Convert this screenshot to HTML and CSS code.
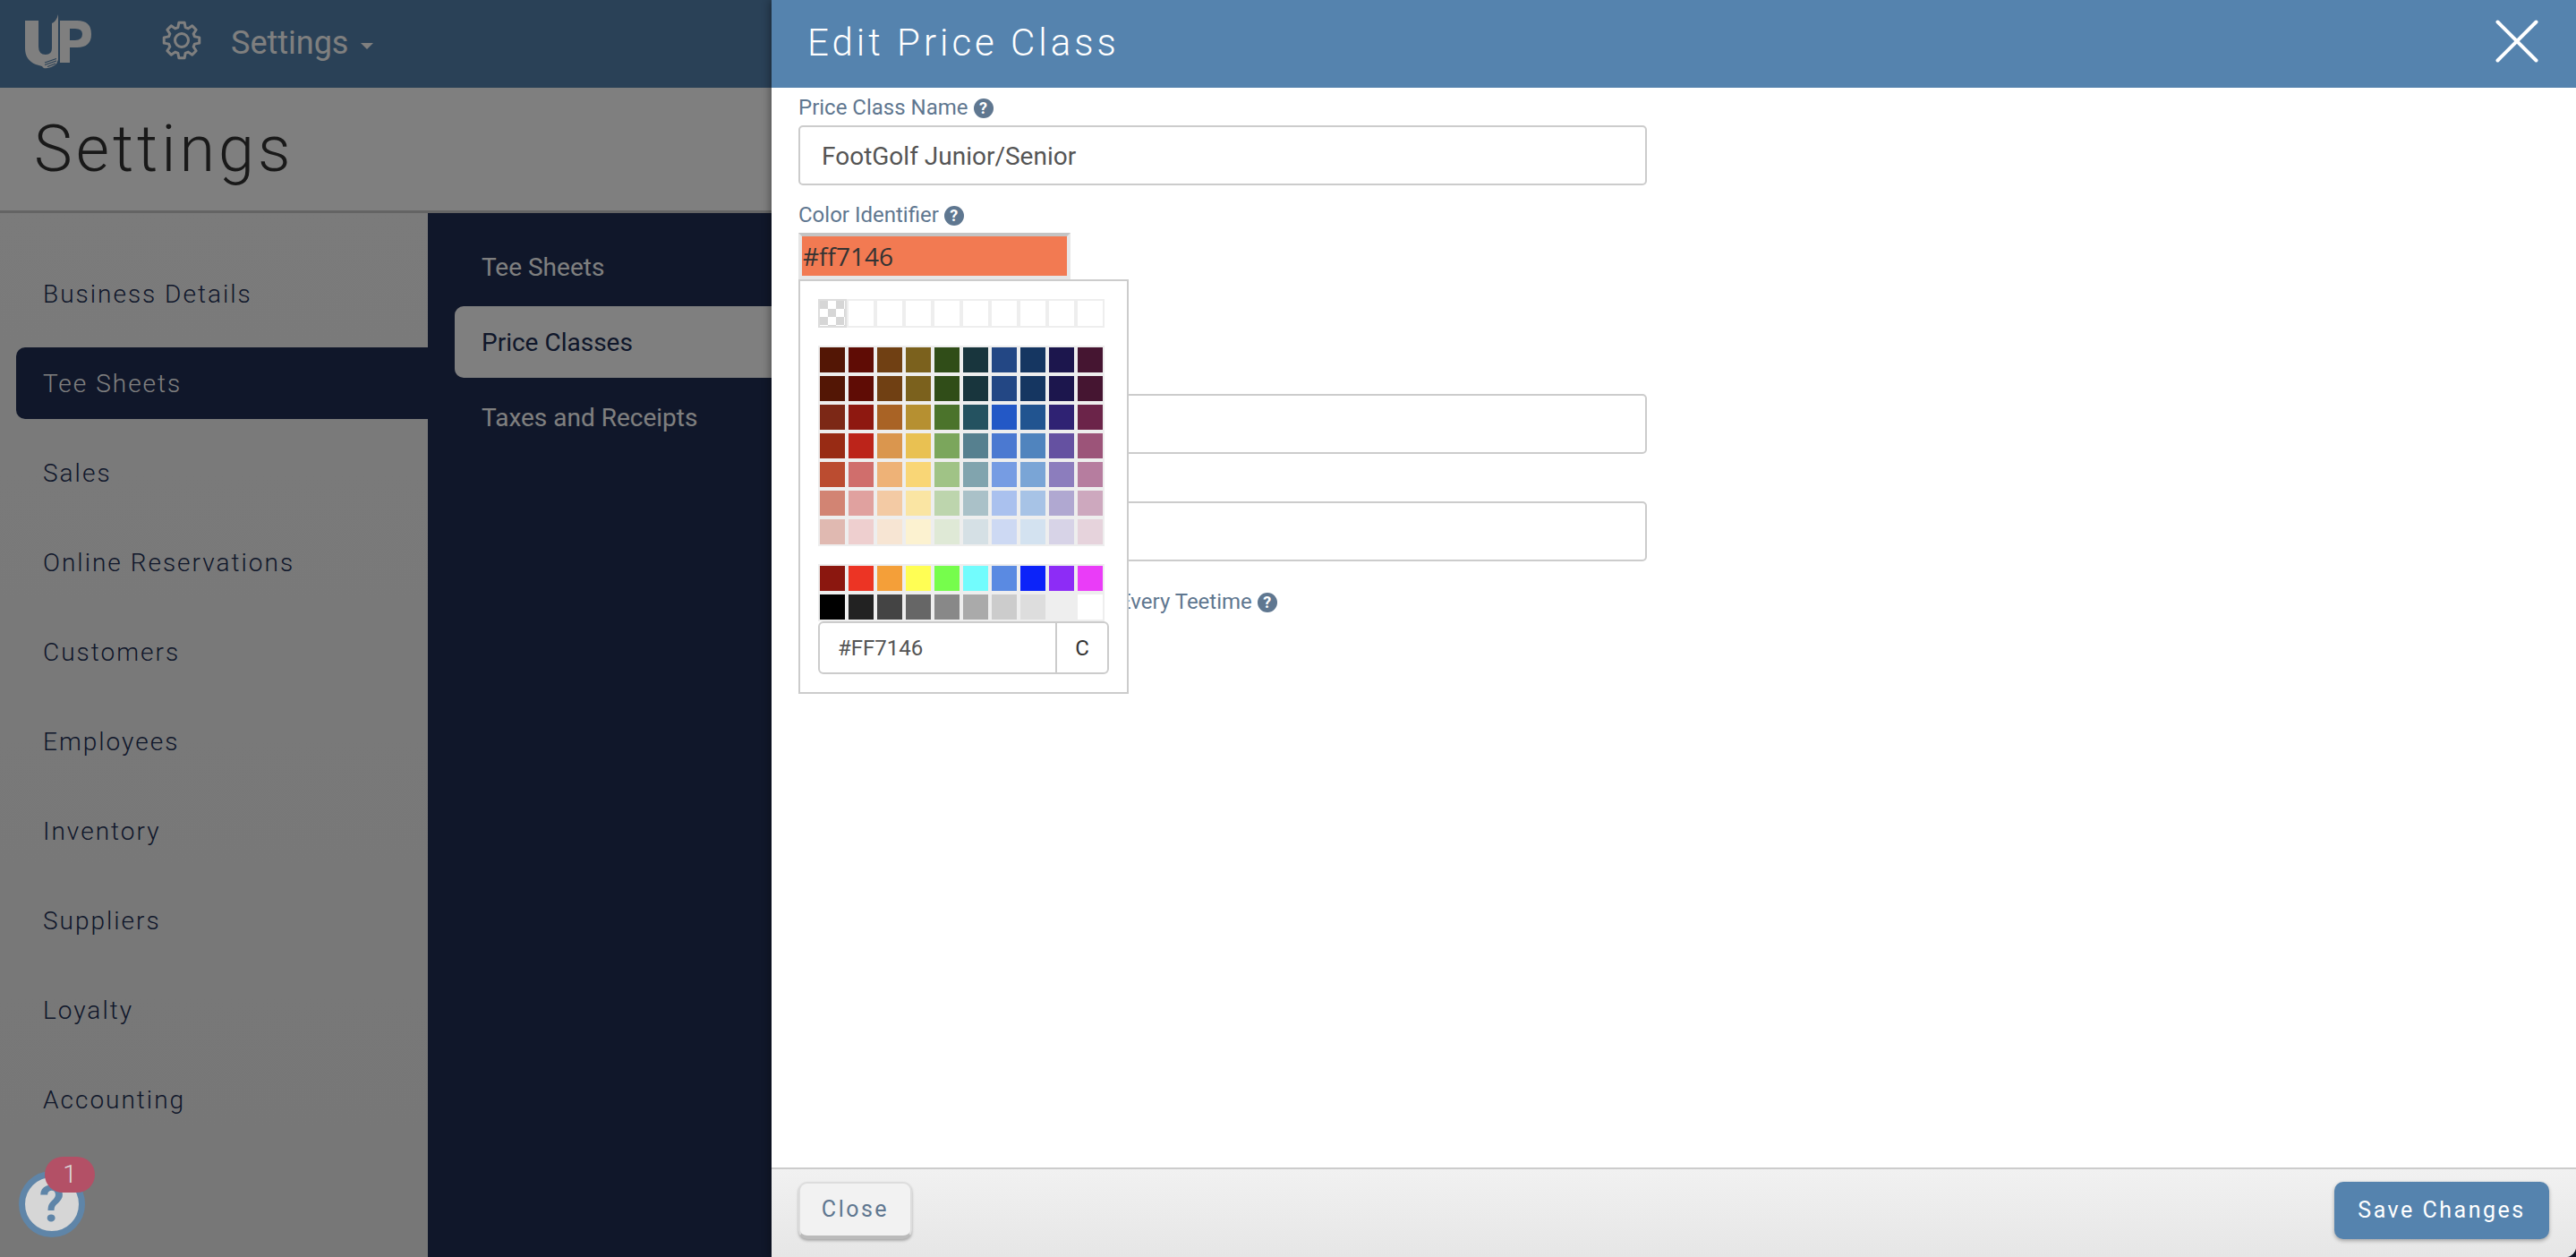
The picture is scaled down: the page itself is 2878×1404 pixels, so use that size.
FILE: index.html
```html
<!DOCTYPE html>
<html lang="en">
<head>
<meta charset="utf-8">
<title>Edit Price Class</title>
<link rel="stylesheet" href="styles.css">
</head>
<body>
<div class="app">
  <header class="topbar">
    <svg class="logo" viewBox="0 0 90 75" aria-hidden="true">
      <path class="logo-fill" d="M8 13H23V42Q23 51 31 51Q38 51 38 44V16Q43 14 45 6V56L38 60L27 64L20 62Q8 57 8 44Z"/>
      <path class="logo-fill" fill-rule="evenodd" d="M47 13H66Q82 13 82 28Q82 43 66 43H58V60H47ZM58 22V35H64Q72 35 72 28Q72 22 64 22Z"/>
      <path class="logo-fill" d="M26 60Q34 52 45 53Q46 62 37 65Q31 67 29 66Q26 64 26 60Z"/>
      <path class="logo-lines" d="M30 60L43 55.5M30 62.5L43 58M33 64.5L42 61"/>
    </svg>
    <svg class="gear" viewBox="0 0 48 48" aria-hidden="true">
      <polygon transform="translate(24 24)" points="14.42,-4.13 19.75,-3.13 19.75,3.13 14.42,4.13 13.12,7.27 16.18,11.76 11.76,16.18 7.27,13.12 4.13,14.42 3.13,19.75 -3.13,19.75 -4.13,14.42 -7.27,13.12 -11.76,16.18 -16.18,11.76 -13.12,7.27 -14.42,4.13 -19.75,3.13 -19.75,-3.13 -14.42,-4.13 -13.12,-7.27 -16.18,-11.76 -11.76,-16.18 -7.27,-13.12 -4.13,-14.42 -3.13,-19.75 3.13,-19.75 4.13,-14.42 7.27,-13.12 11.76,-16.18 16.18,-11.76 13.12,-7.27"/>
      <circle cx="24" cy="24" r="7.5"/>
    </svg>
    <span class="top-title">Settings</span>
    <span class="caret"></span>
  </header>
  <div class="page-head"><h1>Settings</h1></div>
  <div class="columns">
    <nav class="side">
      <a>Business Details</a>
      <a class="on">Tee Sheets</a>
      <a>Sales</a>
      <a>Online Reservations</a>
      <a>Customers</a>
      <a>Employees</a>
      <a>Inventory</a>
      <a>Suppliers</a>
      <a>Loyalty</a>
      <a>Accounting</a>
    </nav>
    <nav class="sub">
      <a>Tee Sheets</a>
      <a class="on">Price Classes</a>
      <a>Taxes and Receipts</a>
    </nav>
  </div>
</div>
<div class="backdrop"></div>
<div class="fab">
  <span class="fab-mark">?</span>
  <span class="fab-badge">1</span>
</div>
<section class="modal">
  <div class="modal-head">
    <h2>Edit Price Class</h2>
    <svg class="x" viewBox="0 0 48 48" aria-hidden="true"><path d="M2.5 2.5l43 43M45.5 2.5l-43 43"/></svg>
  </div>
  <div class="modal-body">
    <div class="field">
      <label>Price Class Name <span class="help">?</span></label>
      <div class="input">FootGolf Junior/Senior</div>
    </div>
    <div class="field color-field">
      <label>Color Identifier <span class="help">?</span></label>
      <div class="color-input"><span class="color-value">#ff7146</span></div>
      <div class="picker">
        <div class="swatches blank">
          <i class="none"></i><i></i><i></i><i></i><i></i><i></i><i></i><i></i><i></i><i></i>
        </div>
        <div class="swatches">
          <i class="c1"></i><i class="c2"></i><i class="c3"></i><i class="c4"></i><i class="c5"></i><i class="c6"></i><i class="c7"></i><i class="c8"></i><i class="c9"></i><i class="c10"></i>
          <i class="c1"></i><i class="c2"></i><i class="c3"></i><i class="c4"></i><i class="c5"></i><i class="c6"></i><i class="c7"></i><i class="c8"></i><i class="c9"></i><i class="c10"></i>
          <i class="c11"></i><i class="c12"></i><i class="c13"></i><i class="c14"></i><i class="c15"></i><i class="c16"></i><i class="c17"></i><i class="c18"></i><i class="c19"></i><i class="c20"></i>
          <i class="c21"></i><i class="c22"></i><i class="c23"></i><i class="c24"></i><i class="c25"></i><i class="c26"></i><i class="c27"></i><i class="c28"></i><i class="c29"></i><i class="c30"></i>
          <i class="c31"></i><i class="c32"></i><i class="c33"></i><i class="c34"></i><i class="c35"></i><i class="c36"></i><i class="c37"></i><i class="c38"></i><i class="c39"></i><i class="c40"></i>
          <i class="c41"></i><i class="c42"></i><i class="c43"></i><i class="c44"></i><i class="c45"></i><i class="c46"></i><i class="c47"></i><i class="c48"></i><i class="c49"></i><i class="c50"></i>
          <i class="c51"></i><i class="c52"></i><i class="c53"></i><i class="c54"></i><i class="c55"></i><i class="c56"></i><i class="c57"></i><i class="c58"></i><i class="c59"></i><i class="c60"></i>
        </div>
        <div class="swatches base">
          <i class="b1"></i><i class="b2"></i><i class="b3"></i><i class="b4"></i><i class="b5"></i><i class="b6"></i><i class="b7"></i><i class="b8"></i><i class="b9"></i><i class="b10"></i>
          <i class="g1"></i><i class="g2"></i><i class="g3"></i><i class="g4"></i><i class="g5"></i><i class="g6"></i><i class="g7"></i><i class="g8"></i><i class="g9"></i><i class="g10"></i>
        </div>
        <div class="hex-group">
          <span class="hex">#FF7146</span>
          <span class="hex-btn">C</span>
        </div>
      </div>
    </div>
    <div class="field spacer-field"><div class="input"></div></div>
    <div class="field spacer-field"><div class="input"></div></div>
    <div class="check-row">Every Teetime <span class="help">?</span></div>
  </div>
  <div class="modal-foot">
    <button class="btn btn-close">Close</button>
    <button class="btn btn-save">Save Changes</button>
  </div>
</section>
</body>
</html>
```
FILE: styles.css
```css
* { box-sizing: border-box; }
html, body { margin: 0; height: 100%; overflow: hidden; }
body { font-family: Roboto, sans-serif; background: #fff; }
.app { width: 2878px; height: 1404px; display: flex; flex-direction: column; }

.topbar { height: 98px; background: #5583ae; display: flex; align-items: center; color: #fff; flex: none; }
.logo { width: 90px; height: 75px; margin: -3px 0 0 20px; flex: none; }
.logo-fill { fill: #fff; }
.logo-lines { stroke: #5583ae; stroke-width: 1.2; fill: none; }
.gear { width: 48px; height: 48px; margin: -8px 0 0 69px; fill: none; stroke: #fff; stroke-width: 3; stroke-linejoin: round; flex: none; }
.top-title { font-size: 36px; margin-left: 31px; margin-top: -2px; }
.caret { width: 0; height: 0; border: 7.5px solid transparent; border-top-color: #fff; border-bottom: 0; margin: 4px 0 0 14px; }

.page-head { height: 140px; flex: none; background: #fff; border-bottom: 3px solid #c8c8c8; padding-left: 38px; display: flex; align-items: center; }
.page-head h1 { margin: 0; font-size: 72px; font-weight: 300; letter-spacing: 4px; color: #333; }

.columns { flex: 1; display: flex; min-height: 0; }
.side { width: 478px; background: linear-gradient(#f6f6f6, #eee); padding: 50px 0 0 18px; display: flex; flex-direction: column; gap: 20px; }
.side a { height: 80px; display: flex; align-items: center; padding-left: 30px; font-size: 28px; font-weight: 300; letter-spacing: 2px; color: #202e54; border-radius: 10px 0 0 10px; flex: none; }
.side a.on { background: #202e54; color: #fff; }
.sub { flex: 1; background: #202e54; padding: 20px 0 0 30px; display: flex; flex-direction: column; gap: 4px; }
.sub a { height: 80px; display: flex; align-items: center; padding-left: 30px; font-size: 28px; color: #fff; border-radius: 10px 0 0 10px; }
.sub a.on { background: #fff; color: #202e54; }

.backdrop { position: absolute; inset: 0; background: rgba(0,0,0,.5); }

.fab { position: absolute; left: 21px; top: 1308px; width: 74px; height: 74px; border-radius: 50%; background: #d6d6d6; border: 7px solid #5f85a8; display: flex; align-items: center; justify-content: center; }
.fab-mark { font-size: 56px; font-weight: 700; color: #5f85a8; line-height: 1; filter: blur(.6px); }
.fab-badge { position: absolute; left: 22px; top: -23px; width: 56px; height: 40px; border-radius: 20px; background: #b35066; color: #ddd; font-size: 28px; font-weight: 300; text-align: center; line-height: 40px; }

.modal { position: absolute; left: 862px; top: 0; width: 2016px; height: 1404px; background: #fff; display: flex; flex-direction: column; border-bottom-right-radius: 12px; box-shadow: -2px 0 8px rgba(0,0,0,.35); }
.modal-head { height: 98px; flex: none; background: #5583ae; display: flex; align-items: center; justify-content: space-between; padding: 0 42px 3px 40px; }
.modal-head h2 { margin: 0; font-size: 42px; font-weight: 300; letter-spacing: 4px; color: #fff; }
.x { width: 48px; height: 48px; margin-top: -3px; fill: none; stroke: #fff; stroke-width: 4; stroke-linecap: round; }

.modal-body { flex: 1; padding: 6px 30px 0; min-height: 0; }
.field { position: relative; width: 948px; }
.field label { display: block; height: 36px; font-size: 24px; line-height: 32px; color: #5f7790; }
.input { height: 67px; border: 2px solid #ccc; border-radius: 5px; padding: 2px 0 0 24px; display: flex; align-items: center; font-size: 28px; color: #555; }
.help { display: inline-block; width: 22px; height: 22px; border-radius: 50%; background: #5f7790; color: #fff; font-size: 18px; font-weight: 700; line-height: 22px; text-align: center; vertical-align: 1px; }
.color-field { margin-top: 17px; height: 216px; }
.color-input { width: 304px; height: 52px; border: 4px solid #e6e6e6; border-top-color: #c4c4c4; background: #f27a52; display: flex; align-items: center; }
.color-value { font-family: "Open Sans", sans-serif; font-size: 28px; color: #333; padding-left: 1px; }

.picker { position: absolute; left: 0; top: 88px; width: 369px; height: 463px; background: #fff; border: 2px solid #ccc; padding: 20px; z-index: 2; }
.swatches { display: grid; grid-template-columns: repeat(10, 32px); width: 320px; margin-bottom: 20px; }
.swatches i { display: block; height: 32px; border: 2px solid #eee; }
.swatches .none { background: conic-gradient(#fff 25%, #d6d6d6 0 50%, #fff 0 75%, #d6d6d6 0) 0 0 / 18px 18px; border-color: #ddd; }
.swatches.base { margin-bottom: 0; }
.hex-group { width: 325px; height: 59px; border: 2px solid #ccc; border-radius: 6px; display: flex; align-items: center; font-size: 24px; }
.hex { flex: 1; height: 100%; display: flex; align-items: center; padding-left: 20px; color: #555; border-right: 2px solid #ccc; }
.hex-btn { width: 56px; text-align: center; color: #333; }

.c1{background:#531605}.c2{background:#5f0c05}.c3{background:#704013}.c4{background:#7b611d}.c5{background:#304d18}.c6{background:#18353d}.c7{background:#234784}.c8{background:#153661}.c9{background:#1c164d}.c10{background:#451531}
.c11{background:#7c2816}.c12{background:#8e1810}.c13{background:#a96325}.c14{background:#b69031}.c15{background:#4b732b}.c16{background:#245260}.c17{background:#2358c6}.c18{background:#215490}.c19{background:#2f2273}.c20{background:#6b2449}
.c21{background:#982b14}.c22{background:#bc241a}.c23{background:#da964e}.c24{background:#e9c152}.c25{background:#7ba65c}.c26{background:#56808f}.c27{background:#4b79d1}.c28{background:#5084be}.c29{background:#6551a1}.c30{background:#9c5479}
.c31{background:#bb4c30}.c32{background:#d06e6c}.c33{background:#eeb277}.c34{background:#f9d676}.c35{background:#a0c386}.c36{background:#81a4ae}.c37{background:#769ce3}.c38{background:#7aa5d6}.c39{background:#8c7dbd}.c40{background:#b67d9f}
.c41{background:#d28473}.c42{background:#e0a19f}.c43{background:#f3caa4}.c44{background:#fae5a3}.c45{background:#bdd5ad}.c46{background:#aac1c8}.c47{background:#aac1ee}.c48{background:#a7c3e6}.c49{background:#b0a8d1}.c50{background:#cda8be}
.c51{background:#e0b9b1}.c52{background:#eecfcf}.c53{background:#f7e5d3}.c54{background:#fcf2d0}.c55{background:#dfe9d6}.c56{background:#d5e0e5}.c57{background:#cdd9f3}.c58{background:#d3e2f0}.c59{background:#d7d3e7}.c60{background:#e6d3dc}
.b1{background:#8b170f}.b2{background:#ec3424}.b3{background:#f49f39}.b4{background:#fffe54}.b5{background:#76fd4c}.b6{background:#72fcfd}.b7{background:#5a8ae2}.b8{background:#0c23f9}.b9{background:#8d2cf6}.b10{background:#ea3cf8}
.g1{background:#000}.g2{background:#222}.g3{background:#444}.g4{background:#666}.g5{background:#888}.g6{background:#aaa}.g7{background:#ccc}.g8{background:#ddd}.g9{background:#eee}.g10{background:#fff}

.spacer-field + .spacer-field { margin-top: 53px; }
.check-row { margin-top: 30px; padding-left: 358px; font-size: 24px; line-height: 30px; color: #5f7790; }

.modal-foot { height: 100px; flex: none; border-top: 2px solid #ccc; background: linear-gradient(#f1f1f1, #e6e6e6); padding: 14px 30px 0; display: flex; justify-content: space-between; align-items: flex-start; border-bottom-right-radius: 12px; }
.btn { height: 64px; border-radius: 10px; font-family: Roboto, sans-serif; font-size: 25px; letter-spacing: 2.5px; padding: 0 0 2px; cursor: pointer; }
.btn-close { width: 127px; background: #f2f2f2; color: #5f7790; border: 2px solid #ddd; border-bottom: 4px solid #bbb; box-shadow: 0 2px 3px #aaa; }
.btn-save { width: 240px; background: #5583ae; color: #fff; border: 0; box-shadow: 0 2px 4px rgba(0,0,0,.3); }
```
